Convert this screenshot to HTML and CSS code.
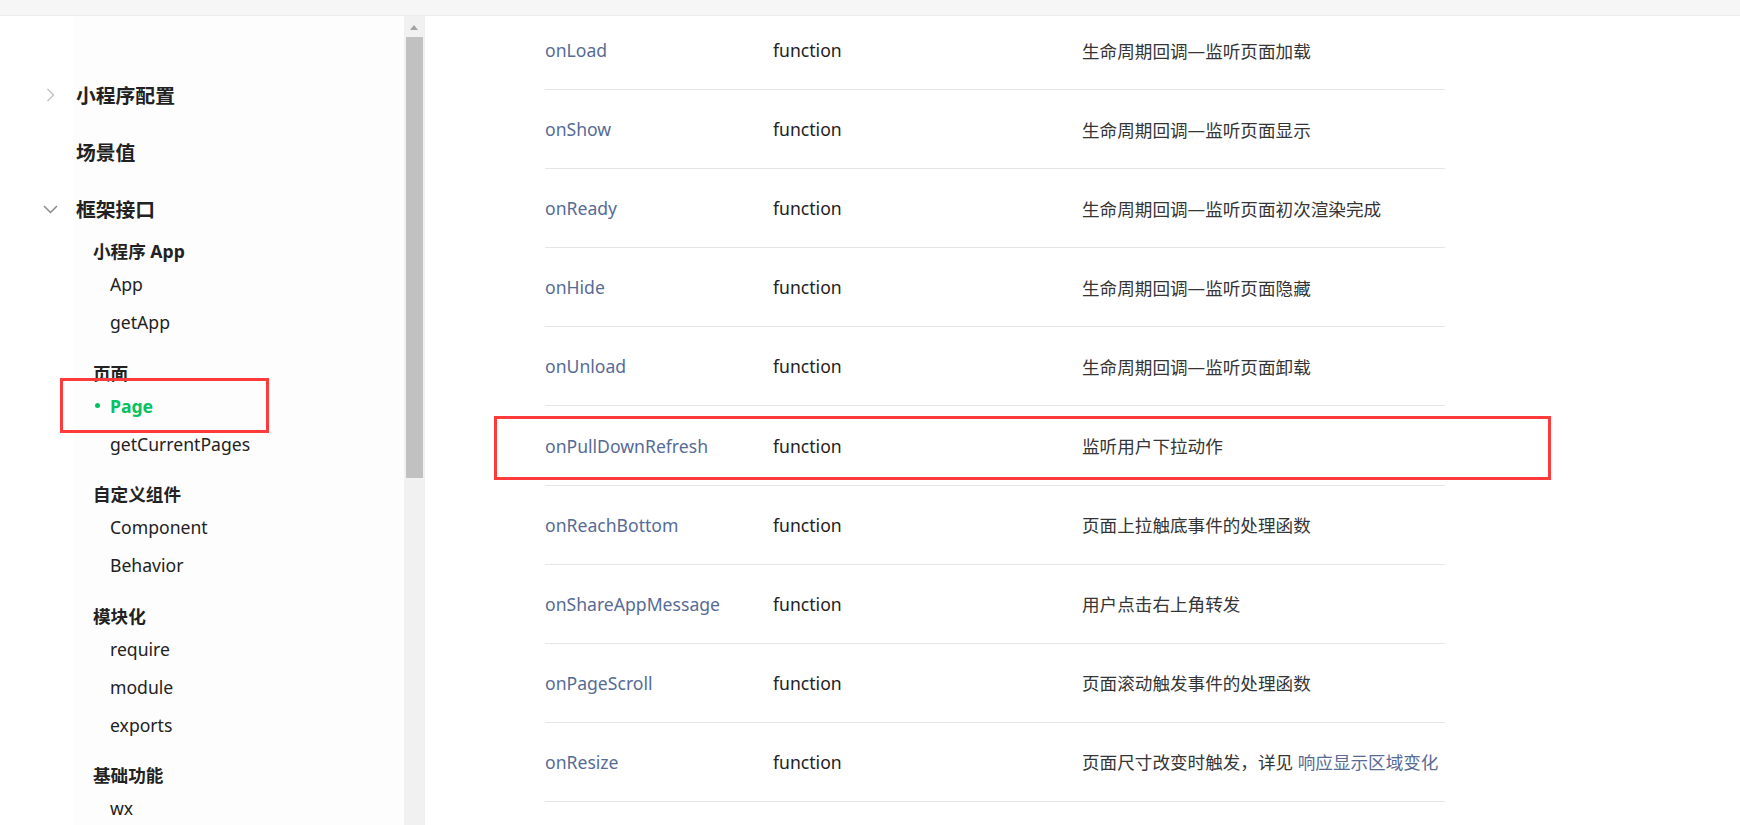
FILE: index.html
```html
<!DOCTYPE html>
<html lang="zh-CN">
<head>
<meta charset="utf-8">
<title>Page</title>
<link rel="stylesheet" href="styles.css">
</head>
<body>
<div class="topbar"></div>
<div class="layout">
  <aside class="sidebar">
    <nav class="nav">
      <div class="top-item">
        <span class="chev"><svg width="20" height="20" viewBox="0 0 20 20"><polyline points="7.5,4 13.5,10 7.5,16" fill="none" stroke="#c4c4c4" stroke-width="1.5"/></svg></span>
        <span>小程序配置</span>
      </div>
      <div class="top-item">
        <span class="chev"></span>
        <span>场景值</span>
      </div>
      <div class="top-item">
        <span class="chev"><svg width="20" height="20" viewBox="0 0 20 20"><polyline points="4,7 10.5,13.5 17,7" fill="none" stroke="#8a8a8a" stroke-width="1.5"/></svg></span>
        <span>框架接口</span>
      </div>
      <div class="group">
        <div class="group-title">小程序 App</div>
        <div class="sub-item">App</div>
        <div class="sub-item">getApp</div>
      </div>
      <div class="group">
        <div class="group-title">页面</div>
        <div class="sub-item active">Page</div>
        <div class="sub-item">getCurrentPages</div>
      </div>
      <div class="group">
        <div class="group-title">自定义组件</div>
        <div class="sub-item">Component</div>
        <div class="sub-item">Behavior</div>
      </div>
      <div class="group">
        <div class="group-title">模块化</div>
        <div class="sub-item">require</div>
        <div class="sub-item">module</div>
        <div class="sub-item">exports</div>
      </div>
      <div class="group">
        <div class="group-title">基础功能</div>
        <div class="sub-item">wx</div>
      </div>
    </nav>
    <div class="scrollbar">
      <div class="sb-arrow"></div>
      <div class="sb-thumb"></div>
    </div>
  </aside>
  <main class="content">
    <div class="table">
      <div class="row"><span class="name">onLoad</span><span class="type">function</span><span class="desc">生命周期回调—监听页面加载</span></div>
      <div class="row"><span class="name">onShow</span><span class="type">function</span><span class="desc">生命周期回调—监听页面显示</span></div>
      <div class="row"><span class="name">onReady</span><span class="type">function</span><span class="desc">生命周期回调—监听页面初次渲染完成</span></div>
      <div class="row"><span class="name">onHide</span><span class="type">function</span><span class="desc">生命周期回调—监听页面隐藏</span></div>
      <div class="row"><span class="name">onUnload</span><span class="type">function</span><span class="desc">生命周期回调—监听页面卸载</span></div>
      <div class="row"><span class="name">onPullDownRefresh</span><span class="type">function</span><span class="desc">监听用户下拉动作</span></div>
      <div class="row"><span class="name">onReachBottom</span><span class="type">function</span><span class="desc">页面上拉触底事件的处理函数</span></div>
      <div class="row"><span class="name">onShareAppMessage</span><span class="type">function</span><span class="desc">用户点击右上角转发</span></div>
      <div class="row"><span class="name">onPageScroll</span><span class="type">function</span><span class="desc">页面滚动触发事件的处理函数</span></div>
      <div class="row"><span class="name">onResize</span><span class="type">function</span><span class="desc">页面尺寸改变时触发，详见 <a class="link" href="#">响应显示区域变化</a></span></div>
    </div>
  </main>
  <div class="annot annot-side"></div>
  <div class="annot annot-main"></div>
</div>
</body>
</html>
```

FILE: styles.css
```css
* { box-sizing: border-box; }
html, body { margin: 0; padding: 0; }
body {
  width: 1740px;
  height: 825px;
  overflow: hidden;
  background: #fff;
  font-family: "Noto Sans", "Noto Sans CJK SC", sans-serif;
  color: #353535;
}
.topbar {
  height: 16px;
  background: #f6f6f6;
  border-bottom: 1px solid #ececec;
}
.layout {
  position: relative;
  display: flex;
  height: 809px;
  overflow: hidden;
}
.sidebar {
  display: flex;
  flex: 0 0 425px;
  height: 100%;
}
.nav {
  width: 404px;
  height: 100%;
  padding-top: 50px;
  background: linear-gradient(to right, #fff 73px, #fdfdfd 73px);
  overflow: hidden;
}
.top-item {
  display: flex;
  align-items: center;
  height: 57px;
  padding-left: 40px;
  font-size: 19.8px;
  font-weight: 700;
  color: #222;
}
.chev {
  display: flex;
  width: 20px;
  height: 20px;
  margin-right: 16px;
}
.group { margin-bottom: 17.5px; }
.group-title {
  padding-left: 93px;
  font-size: 17.6px;
  line-height: 28px;
  font-weight: 700;
  color: #222;
}
.sub-item {
  position: relative;
  padding-left: 110px;
  font-size: 17.6px;
  line-height: 38px;
  color: #222;
}
.sub-item.active {
  color: #07c160;
  font-weight: 700;
}
.sub-item.active::before {
  content: "";
  position: absolute;
  left: 95px;
  top: 16.5px;
  width: 5px;
  height: 5px;
  border-radius: 50%;
  background: #07c160;
}
.scrollbar {
  position: relative;
  width: 21px;
  height: 100%;
  background: #f1f1f1;
}
.sb-arrow {
  position: absolute;
  left: 6px;
  top: 9px;
  width: 0;
  height: 0;
  border-left: 4.5px solid transparent;
  border-right: 4.5px solid transparent;
  border-bottom: 5px solid #a3a3a3;
}
.sb-thumb {
  position: absolute;
  left: 2px;
  top: 21px;
  width: 17px;
  height: 441px;
  background: #c1c1c1;
}
.content {
  flex: 1;
  height: 100%;
  overflow: hidden;
}
.table {
  width: 900px;
  margin: -5px 0 0 120px;
}
.row {
  display: grid;
  grid-template-columns: 228px 309px 1fr;
  align-items: center;
  height: 79.1px;
  border-bottom: 1px solid #e5e5e5;
  font-size: 17.6px;
}
.name { color: #576b95; }
.type { color: #222; }
.desc { color: #353535; }
.link { color: #576b95; text-decoration: none; }
.annot {
  position: absolute;
  border: 3px solid #ff3a3a;
}
.annot-side {
  left: 60px;
  top: 362px;
  width: 209px;
  height: 55px;
}
.annot-main {
  left: 494px;
  top: 400px;
  width: 1057px;
  height: 64px;
}
```
